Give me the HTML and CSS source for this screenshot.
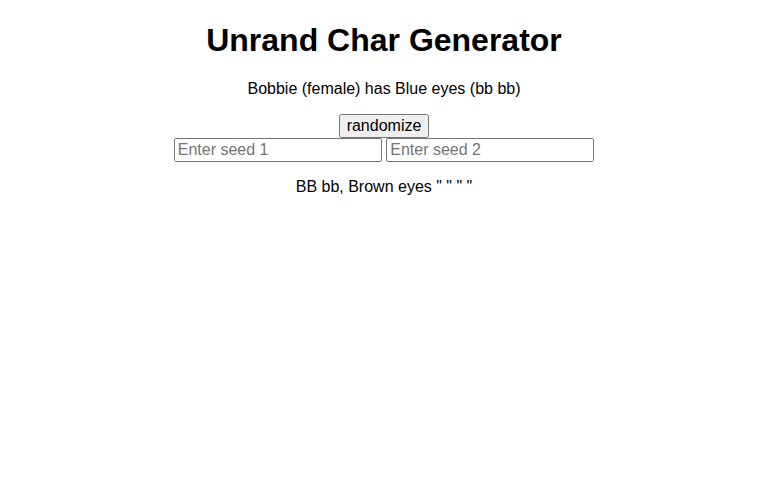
FILE: index.html
```html
<!DOCTYPE html>
<html lang="en">
<head>
  <meta charset="UTF-8" />
  <title>Unrand Char Generator</title>
  <link rel="stylesheet" href="styles.css">
</head>
<body>
  <div class="app">
    <h1>Unrand Char Generator</h1>
    <p class="result">Bobbie (female) has Blue eyes (bb bb)</p>
    <div class="controls">
      <button class="randomize">randomize</button>
    </div>
    <div class="seeds">
      <input type="text" placeholder="Enter seed 1">
      <input type="text" placeholder="Enter seed 2">
    </div>
    <p class="genes">BB bb, Brown eyes " " " "</p>
  </div>
</body>
</html>
```

FILE: styles.css
```css
body {
  margin: 8px;
  font-family: "Liberation Sans", Arial, sans-serif;
  font-size: 16px;
  color: #000;
  background: #fff;
}

.app {
  text-align: center;
}

h1 {
  font-size: 32px;
  margin: 14px 0 21px;
}

.result,
.genes {
  margin: 16px 0;
}

button,
input {
  font-family: inherit;
  font-size: 16px;
}

.seeds input {
  box-sizing: border-box;
  width: 208px;
}
```
